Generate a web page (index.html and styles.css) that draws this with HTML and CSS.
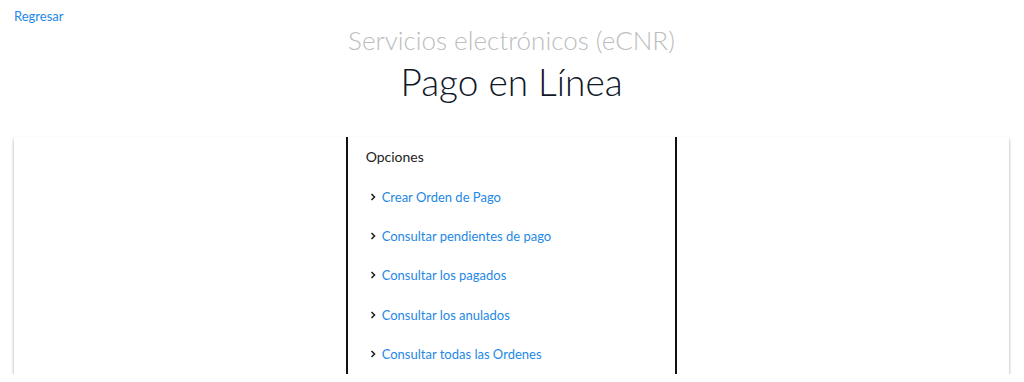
FILE: index.html
```html
<!DOCTYPE html>
<html lang="es">
<head>
    <meta charset="UTF-8">
    <meta name="viewport" content="width=device-width, initial-scale=1.0">
    <title>Pago en Línea</title>
    <link rel="stylesheet" href="styles.css">
</head>
<body>
    <a class="back" href="#">Regresar</a>

    <div class="header">
        <div class="subtitle">Servicios electrónicos (eCNR)</div>
        <h1>Pago en Línea</h1>
    </div>

    <!-- Tarjeta con tres columnas -->
    <div class="card">
        <div class="col"></div>
        <div class="col middle">
            <div class="options-title">Opciones</div>
            <ul class="options">
                <li><svg class="chev" viewBox="0 0 6 8"><polyline points="1.5,1 4.5,4 1.5,7"/></svg><a href="#">Crear Orden de Pago</a></li>
                <li><svg class="chev" viewBox="0 0 6 8"><polyline points="1.5,1 4.5,4 1.5,7"/></svg><a href="#">Consultar pendientes de pago</a></li>
                <li><svg class="chev" viewBox="0 0 6 8"><polyline points="1.5,1 4.5,4 1.5,7"/></svg><a href="#">Consultar los pagados</a></li>
                <li><svg class="chev" viewBox="0 0 6 8"><polyline points="1.5,1 4.5,4 1.5,7"/></svg><a href="#">Consultar los anulados</a></li>
                <li><svg class="chev" viewBox="0 0 6 8"><polyline points="1.5,1 4.5,4 1.5,7"/></svg><a href="#">Consultar todas las Ordenes</a></li>
            </ul>
        </div>
        <div class="col"></div>
    </div>
</body>
</html>
```

FILE: styles.css
```css
body {
    font-family: Lato, "Open Sans", sans-serif;
    margin: 0;
    padding: 5px 15px 0 14px;
    background-color: white;
}

a {
    color: #1e88e5;
    text-decoration: none;
}

.back {
    display: inline-block;
    font-size: 13px;
    line-height: 18px;
}

.header {
    text-align: center;
    margin-top: -1px;
}

.subtitle {
    font-size: 26px;
    font-weight: 300;
    color: #bdbdbd;
    line-height: 32px;
}

h1 {
    margin: 5px 0 0 0;
    font-size: 37px;
    font-weight: 300;
    color: #101828;
    line-height: 42px;
}

.card {
    display: grid;
    grid-template-columns: 1fr 1fr 1fr;
    margin-top: 34px;
    height: 237px;
    background-color: white;
    box-shadow: 0 2px 3px rgba(0,0,0,0.35);
}

.middle {
    border-left: 2px solid #111;
    border-right: 2px solid #111;
    padding: 12px 18px 0 18px;
}

.options-title {
    font-size: 14px;
    color: #222;
    line-height: 16px;
}

.options {
    list-style: none;
    margin: 25px 0 0 0;
    padding: 0 0 0 4px;
}

.options li {
    display: flex;
    align-items: center;
    height: 39.3px;
    margin-top: -13px;
    margin-bottom: 13px;
    font-size: 13px;
}

.chev {
    width: 6px;
    height: 8px;
    margin-right: 6px;
    fill: none;
    stroke: #222;
    stroke-width: 1.6;
}
```
